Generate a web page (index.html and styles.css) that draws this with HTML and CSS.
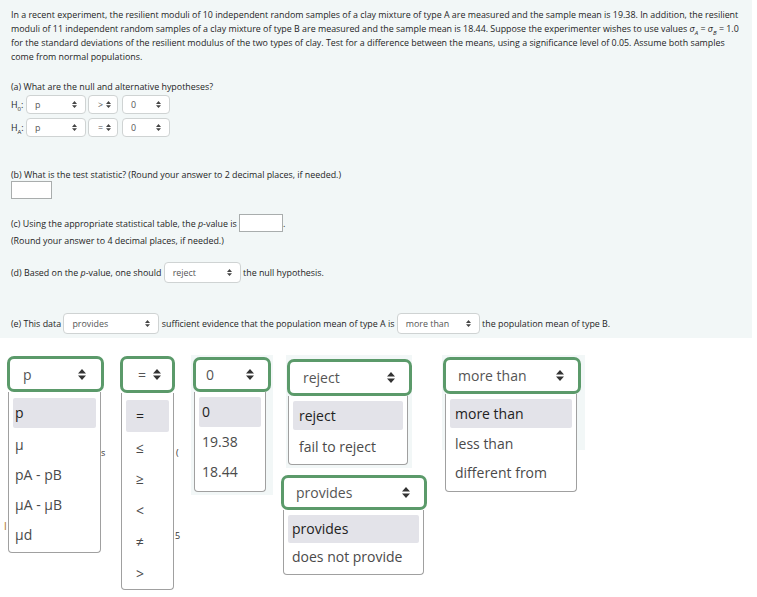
FILE: index.html
```html
<!DOCTYPE html>
<html>
    <head>
        <title>Two sample z test</title>
        <link rel="stylesheet" href="styles.css">
    </head>
    <body>
        <div class="question">
            <p class="intro">In a recent experiment, the resilient moduli of 10 independent random samples of a clay mixture of type A are measured and the sample mean is 19.38. In addition, the resilient<br>moduli of 11 independent random samples of a clay mixture of type B are measured and the sample mean is 18.44. Suppose the experimenter wishes to use values <i>&sigma;<sub>A</sub></i> = <i>&sigma;<sub>B</sub></i> = 1.0<br>for the standard deviations of the resilient modulus of the two types of clay. Test for a difference between the means, using a significance level of 0.05. Assume both samples<br>come from normal populations.</p>

            <p class="part parta">(a) What are the null and alternative hypotheses?</p>
            <div class="hyprow">
                <span class="hlabel">H<sub>0</sub>:</span>
                <span class="sel w60">p<svg width="5" height="7" viewBox="0 0 8 11"><path d="M4 0L8 4.5H0Z M4 11L0 6.5H8Z" fill="#444"/></svg></span>
                <span class="sel w30 gap2">&gt;<svg width="5" height="7" viewBox="0 0 8 11"><path d="M4 0L8 4.5H0Z M4 11L0 6.5H8Z" fill="#444"/></svg></span>
                <span class="sel w48 gap4">0<svg width="5" height="7" viewBox="0 0 8 11"><path d="M4 0L8 4.5H0Z M4 11L0 6.5H8Z" fill="#444"/></svg></span>
            </div>
            <div class="hyprow second">
                <span class="hlabel">H<sub>A</sub>:</span>
                <span class="sel w60">p<svg width="5" height="7" viewBox="0 0 8 11"><path d="M4 0L8 4.5H0Z M4 11L0 6.5H8Z" fill="#444"/></svg></span>
                <span class="sel w30 gap2">=<svg width="5" height="7" viewBox="0 0 8 11"><path d="M4 0L8 4.5H0Z M4 11L0 6.5H8Z" fill="#444"/></svg></span>
                <span class="sel w48 gap4">0<svg width="5" height="7" viewBox="0 0 8 11"><path d="M4 0L8 4.5H0Z M4 11L0 6.5H8Z" fill="#444"/></svg></span>
            </div>

            <p class="part partb">(b) What is the test statistic? (Round your answer to 2 decimal places, if needed.)</p>
            <div class="answer wide"></div>

            <div class="line partc">(c) Using the appropriate statistical table, the <i>p</i>-value is <span class="answer small"></span>.</div>
            <p class="part round">(Round your answer to 4 decimal places, if needed.)</p>

            <div class="line partd">(d) Based on the <i>p</i>-value, one should <span class="sel w77">reject<svg width="5" height="7" viewBox="0 0 8 11"><path d="M4 0L8 4.5H0Z M4 11L0 6.5H8Z" fill="#444"/></svg></span> the null hypothesis.</div>

            <div class="line parte">(e) This data <span class="sel w96">provides<svg width="5" height="7" viewBox="0 0 8 11"><path d="M4 0L8 4.5H0Z M4 11L0 6.5H8Z" fill="#444"/></svg></span> sufficient evidence that the population mean of type A is <span class="sel w83">more than<svg width="5" height="7" viewBox="0 0 8 11"><path d="M4 0L8 4.5H0Z M4 11L0 6.5H8Z" fill="#444"/></svg></span> the population mean of type B.</div>
        </div>

        <!-- the open dropdown lists, each one where it was captured -->
        <div class="canvas">
            <div class="scrap s2">s</div>
            <div class="scrap s3">(</div>
            <div class="scrap s4">)</div>
            <div class="scrap s5">5</div>
            <div class="scrap s6">l</div>

            <div class="patch p3"></div>
            <div class="patch p4"></div>
            <div class="patch p6"></div>

            <div class="dd d1">
                <div class="head">p<svg width="8" height="11" viewBox="0 0 8 11"><path d="M4 0L8 4.5H0Z M4 11L0 6.5H8Z" fill="#333"/></svg></div>
                <div class="list">
                    <div class="opt on">p</div>
                    <div class="opt">&micro;</div>
                    <div class="opt">pA - pB</div>
                    <div class="opt">&micro;A - &micro;B</div>
                    <div class="opt">&micro;d</div>
                </div>
            </div>

            <div class="dd d2">
                <div class="head">=<svg width="8" height="11" viewBox="0 0 8 11"><path d="M4 0L8 4.5H0Z M4 11L0 6.5H8Z" fill="#333"/></svg></div>
                <div class="list">
                    <div class="opt on">=</div>
                    <div class="opt">&le;</div>
                    <div class="opt">&ge;</div>
                    <div class="opt">&lt;</div>
                    <div class="opt">&ne;</div>
                    <div class="opt">&gt;</div>
                </div>
            </div>

            <div class="dd d3">
                <div class="head">0<svg width="8" height="11" viewBox="0 0 8 11"><path d="M4 0L8 4.5H0Z M4 11L0 6.5H8Z" fill="#333"/></svg></div>
                <div class="list">
                    <div class="opt on">0</div>
                    <div class="opt">19.38</div>
                    <div class="opt">18.44</div>
                </div>
            </div>

            <div class="dd d4">
                <div class="head">reject<svg width="8" height="11" viewBox="0 0 8 11"><path d="M4 0L8 4.5H0Z M4 11L0 6.5H8Z" fill="#333"/></svg></div>
                <div class="list">
                    <div class="opt on">reject</div>
                    <div class="opt">fail to reject</div>
                </div>
            </div>

            <div class="dd d5">
                <div class="head">provides<svg width="8" height="11" viewBox="0 0 8 11"><path d="M4 0L8 4.5H0Z M4 11L0 6.5H8Z" fill="#333"/></svg></div>
                <div class="list">
                    <div class="opt on">provides</div>
                    <div class="opt">does not provide</div>
                </div>
            </div>

            <div class="dd d6">
                <div class="head">more than<svg width="8" height="11" viewBox="0 0 8 11"><path d="M4 0L8 4.5H0Z M4 11L0 6.5H8Z" fill="#333"/></svg></div>
                <div class="list">
                    <div class="opt on">more than</div>
                    <div class="opt">less than</div>
                    <div class="opt">different from</div>
                </div>
            </div>
        </div>
    </body>
</html>
```

FILE: styles.css
```css
body {
    margin: 0;
    width: 757px;
    font-family: "Open Sans", sans-serif;
    background-color: #ffffff;
    color: #1e1e1e;
}
.question {
    width: 730px;
    height: 330px;
    padding: 8px 11px 0 11px;
    background-color: #f2f7f7;
    font-size: 8.9px;
}
p {
    margin: 0;
}
.intro {
    line-height: 14px;
    white-space: nowrap;
}
sub {
    font-size: 6px;
    line-height: 0;
}
.part {
    line-height: 14px;
}
.parta {
    margin-top: 16px;
}
.hyprow {
    display: flex;
    align-items: center;
    height: 19px;
    margin-top: 1px;
}
.hyprow.second {
    margin-top: 4px;
}
.hlabel {
    width: 15px;
}
.sel {
    display: inline-flex;
    align-items: center;
    justify-content: space-between;
    box-sizing: border-box;
    height: 19px;
    padding: 0 8px 0 8px;
    background-color: #ffffff;
    border: 1px solid #cfd3d3;
    border-radius: 4px;
    color: #555555;
    vertical-align: middle;
}
.w60 { width: 60px; }
.w30 { width: 30px; padding-left: 9px; padding-right: 6px; }
.w48 { width: 48px; }
.w77 { width: 77px; height: 21px; }
.w96 { width: 96px; height: 21px; }
.w83 { width: 83px; height: 21px; }
.gap2 { margin-left: 2px; }
.gap4 { margin-left: 4px; }
.partb {
    margin-top: 31px;
}
.answer {
    display: inline-block;
    box-sizing: border-box;
    height: 18px;
    background-color: #ffffff;
    border: 1px solid #a9adad;
    vertical-align: middle;
}
.answer.wide {
    display: block;
    width: 41px;
    margin-top: -1px;
}
.answer.small {
    width: 44px;
}
.line {
    display: flex;
    align-items: center;
    white-space: pre;
}
.partc {
    margin-top: 15px;
    height: 18px;
}
.round {
    margin-top: 2px;
}
.partd {
    margin-top: 14px;
    height: 21px;
}
.parte {
    margin-top: 30px;
    height: 21px;
}
.canvas {
    position: relative;
    height: 259px;
}
.patch {
    position: absolute;
    background-color: #f2f7f7;
}
.p3 { left: 191px; top: 17px; width: 82px; height: 140px; }
.p4 { left: 286px; top: 17px; width: 126px; height: 113px; }
.p6 { left: 442px; top: 17px; width: 143px; height: 95px; }
.scrap {
    position: absolute;
    font-size: 9px;
    color: #333333;
    white-space: nowrap;
}
.s2 { left: 101px; top: 108px; }
.s3 { left: 176px; top: 108px; }
.s4 { left: 267px; top: 108px; }
.s5 { left: 175px; top: 191px; }
.s6 { left: 4px; top: 180px; color: #b0782a; font-size: 11px; }
.dd {
    position: absolute;
    font-size: 14px;
}
.head {
    display: flex;
    align-items: center;
    justify-content: space-between;
    box-sizing: border-box;
    background-color: #ffffff;
    border: 3px solid #5b9a6a;
    border-radius: 7px;
    color: #555555;
}
.list {
    box-sizing: border-box;
    background-color: #ffffff;
    border: 1px solid #a0a0a0;
    border-top: none;
    border-radius: 0 0 4px 4px;
    padding: 5px 4px 0 4px;
    color: #4a4a4a;
}
.opt {
    height: 30px;
    line-height: 30px;
    padding-left: 2px;
}
.opt.on {
    background-color: #e3e3e9;
    border-radius: 2px;
    color: #222222;
}
.d1 { left: 7px; top: 18px; }
.d1 .head { width: 97px; height: 36px; padding: 0 15px 0 13px; }
.d1 .list { width: 93px; height: 161px; margin-left: 1px; padding-top: 6px; }
.d1 .opt.on { margin-bottom: 2px; }
.d2 { left: 120px; top: 18px; }
.d2 .head { width: 55px; height: 37px; padding: 0 11px 0 15px; }
.d2 .list { width: 53px; height: 197px; margin-left: 1px; padding-top: 7px; }
.d2 .opt { height: 31.5px; line-height: 31.5px; padding-left: 10px; }
.d3 { left: 193px; top: 19px; }
.d3 .head { width: 78px; height: 35px; padding: 0 14px 0 10px; }
.d3 .list { width: 72px; height: 100px; margin-left: 1px; }
.d3 .opt { padding-left: 3px; }
.d4 { left: 287px; top: 21px; }
.d4 .head { width: 125px; height: 37px; padding: 0 14px 0 13px; }
.d4 .list { width: 120px; height: 69px; margin-left: 1px; }
.d4 .opt { height: 29px; line-height: 29px; padding-left: 6px; }
.d4 .opt.on { margin-bottom: 2px; }
.d5 { left: 281px; top: 137px; }
.d5 .head { width: 146px; height: 35px; padding: 0 14px 0 12px; }
.d5 .list { width: 141px; height: 65px; margin-left: 2px; }
.d5 .opt { height: 28px; line-height: 28px; padding-left: 4px; }
.d6 { left: 443px; top: 19px; }
.d6 .head { width: 138px; height: 37px; padding: 0 14px 0 12px; }
.d6 .list { width: 132px; height: 98px; margin-left: 2px; }
.d6 .opt { height: 29px; line-height: 29px; padding-left: 5px; }
.d6 .opt.on { margin-bottom: 1px; }
```
